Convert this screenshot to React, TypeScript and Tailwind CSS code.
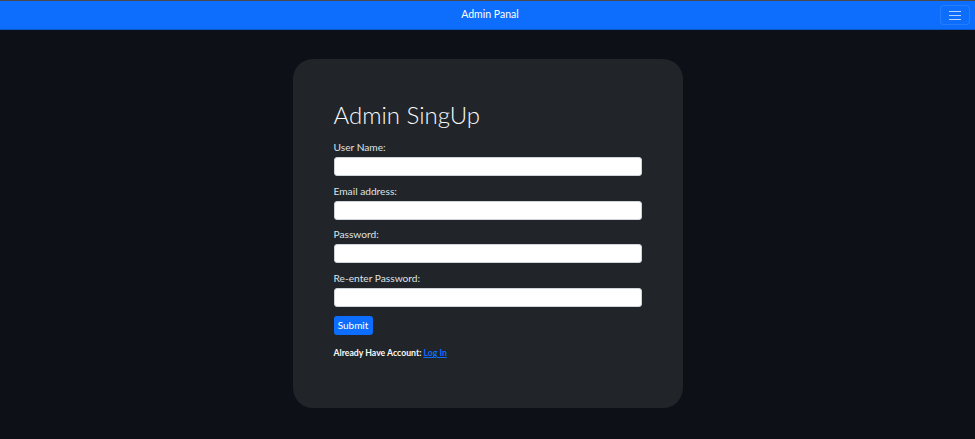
export default function App() {
  const fields = ['User Name:', 'Email address:', 'Password:', 'Re-enter Password:'];

  return (
    <div className="min-h-screen bg-[#0d1117] font-['Lato','Noto_Sans',sans-serif] text-white">
      {/* Navbar */}
      <nav className="border-t border-[#4a4a4a] border-b border-b-[#0a58ca] bg-[#0d6efd] h-[30px] flex items-center relative">
        <span className="mx-auto pl-[5px] text-[10.5px] text-white">Admin Panal</span>
        <button className="absolute right-[5px] top-[4px] w-[30px] h-[20px] rounded-[3px] border border-white/10 flex flex-col items-center justify-center gap-[3px]">
          <span className="block w-[12px] h-px bg-white/70" />
          <span className="block w-[12px] h-px bg-white/70" />
          <span className="block w-[12px] h-px bg-white/70" />
        </button>
      </nav>

      {/* Card */}
      <div className="flex justify-center pt-[29px]">
        <div className="w-[390px] h-[349px] bg-[#212529] rounded-[20px] px-[41px] pt-[40px]">
          <h1 className="text-[24px] font-light leading-[32px] mb-[9px] text-[#f8f9fa]">Admin SingUp</h1>
          <form className="flex flex-col">
            {fields.map((f) => (
              <div key={f} className="mb-[7.67px]">
                <label className="block text-[10.2px] leading-[14px] mb-[3px] text-[#dee2e6]">{f}</label>
                <input
                  type={f.includes('Password') ? 'password' : 'text'}
                  className="block w-full h-[19px] bg-white rounded-[3px] border border-[#ced4da] outline-none"
                />
              </div>
            ))}
            <button type="button" className="block mt-[1.3px] bg-[#0d6efd] text-white text-[10px] rounded-[3px] w-[39px] h-[19px]">
              Submit
            </button>
            <p className="mt-[11px] text-[8.7px] leading-[14px] font-bold text-[#f8f9fa]">
              Already Have Account: <a href="#" className="text-[#0d6efd] underline">Log In</a>
            </p>
          </form>
        </div>
      </div>
    </div>
  );
}
